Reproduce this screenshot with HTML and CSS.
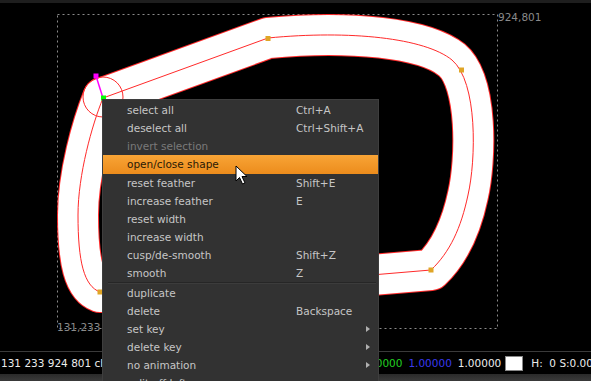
FILE: index.html
```html
<!DOCTYPE html>
<html>
<head>
<meta charset="utf-8">
<link rel="stylesheet" href="styles.css">
</head>
<body>
<div class="app">
  <div class="topbar"></div>
  <div class="viewer">
    <svg class="canvas" width="591" height="348" viewBox="0 3 591 348">
      <rect x="57.5" y="14.5" width="440" height="314" fill="none" stroke="#8a8a8a" stroke-width="1" stroke-dasharray="2 3"/>
      <text x="498" y="21" class="coord">924,801</text>
      <text x="57" y="331" class="coord">131,233</text>
      <path d="M103,98 L268,38 C350,30 425,38 452,60 C478,82 476,160 468,195 C461,228 450,252 431,270 L300,281 L100,292 C84,286 78,262 78,215 C78,175 92,125 103,98 Z" fill="none" stroke="#ff2a2a" stroke-width="42" stroke-linejoin="round"/>
      <path d="M103,98 L268,38 C350,30 425,38 452,60 C478,82 476,160 468,195 C461,228 450,252 431,270 L300,281 L100,292 C84,286 78,262 78,215 C78,175 92,125 103,98 Z" fill="none" stroke="#ffffff" stroke-width="40" stroke-linejoin="round"/>
      <path d="M103,98 L268,38 C350,30 425,38 452,60 C478,82 476,160 468,195 C461,228 450,252 431,270 L300,281 L100,292 C84,286 78,262 78,215 C78,175 92,125 103,98 Z" fill="none" stroke="#ff2a2a" stroke-width="1"/>
      <circle cx="103" cy="97" r="20" fill="none" stroke="#ff2a2a" stroke-width="1"/>
      <line x1="96" y1="76" x2="103" y2="98" stroke="#ff00ff" stroke-width="1.5"/>
      <rect x="93.5" y="73.5" width="5" height="5" fill="#ff00ff"/>
      <rect x="101" y="95.5" width="5" height="5" fill="#00ff00"/>
      <rect x="265.5" y="36" width="5" height="5" fill="#e0a526"/>
      <rect x="459" y="67.5" width="5" height="5" fill="#e0a526"/>
      <rect x="428.5" y="267.5" width="5" height="5" fill="#e0a526"/>
      <rect x="97.5" y="289.5" width="5" height="5" fill="#e0a526"/>
    </svg>
  </div>
  <div class="status-line"></div>
  <div class="status">
    <span class="st-left">131 233 924 801 channels: rgba  x=520 y=412 0.00000</span>
    <span class="st-green">1.00000</span>
    <span class="st-blue">1.00000</span>
    <span class="st-white">1.00000</span>
    <span class="swatch"></span>
    <span class="st-hsv">H:  0 S:0.00000 V:1.00000</span>
  </div>
  <div class="bottombar"></div>

  <div class="menu">
    <div class="item"><span class="label">select all</span><span class="key">Ctrl+A</span><span class="arr"></span></div>
    <div class="item"><span class="label">deselect all</span><span class="key">Ctrl+Shift+A</span><span class="arr"></span></div>
    <div class="item disabled"><span class="label">invert selection</span><span class="key"></span><span class="arr"></span></div>
    <div class="item active"><span class="label">open/close shape</span><span class="key"></span><span class="arr"></span></div>
    <div class="item"><span class="label">reset feather</span><span class="key">Shift+E</span><span class="arr"></span></div>
    <div class="item"><span class="label">increase feather</span><span class="key">E</span><span class="arr"></span></div>
    <div class="item"><span class="label">reset width</span><span class="key"></span><span class="arr"></span></div>
    <div class="item"><span class="label">increase width</span><span class="key"></span><span class="arr"></span></div>
    <div class="item"><span class="label">cusp/de-smooth</span><span class="key">Shift+Z</span><span class="arr"></span></div>
    <div class="item"><span class="label">smooth</span><span class="key">Z</span><span class="arr"></span></div>
    <div class="sep"></div>
    <div class="item"><span class="label">duplicate</span><span class="key"></span><span class="arr"></span></div>
    <div class="item"><span class="label">delete</span><span class="key">Backspace</span><span class="arr"></span></div>
    <div class="item"><span class="label">set key</span><span class="key"></span><span class="arr sub"></span></div>
    <div class="item"><span class="label">delete key</span><span class="key"></span><span class="arr sub"></span></div>
    <div class="item"><span class="label">no animation</span><span class="key"></span><span class="arr sub"></span></div>
    <div class="item"><span class="label">split off left</span><span class="key"></span><span class="arr"></span></div>
  </div>

  <svg class="cursor" width="14" height="21" viewBox="0 0 14 21">
    <path d="M1,1 L1,16 L4.5,12.5 L7.5,19 L10,18 L7,11.5 L12,11.5 Z" fill="#ffffff" stroke="#000000" stroke-width="1" stroke-linejoin="round"/>
  </svg>
</div>
</body>
</html>
```
FILE: styles.css
```css
html, body {
  margin: 0;
  padding: 0;
  background: #000;
}
.app {
  position: relative;
  width: 591px;
  height: 381px;
  overflow: hidden;
  display: flex;
  flex-direction: column;
  font-family: "DejaVu Sans", Verdana, sans-serif;
  font-size: 10.5px;
}
.topbar {
  height: 3px;
  background: #1e1e1e;
  flex: none;
}
.viewer {
  position: relative;
  height: 348px;
  flex: none;
  background: #000;
}
.canvas {
  position: absolute;
  left: 0;
  top: 0;
  display: block;
}
.coord {
  font-family: "DejaVu Sans", sans-serif;
  font-size: 10.5px;
  fill: #8a8a8a;
}
.status-line {
  height: 1px;
  background: #3a3a3a;
  flex: none;
}
.status {
  height: 22px;
  flex: none;
  background: #000;
  display: flex;
  align-items: center;
  white-space: pre;
  overflow: hidden;
  color: #ececec;
  line-height: 22px;
}
.st-left {
  width: 358px;
  padding-left: 1px;
  overflow: hidden;
  flex: none;
}
.st-green { color: #22d022; margin-right: 6px; flex: none; }
.st-blue { color: #3a3aee; margin-right: 6px; flex: none; }
.st-white { color: #ececec; margin-right: 4px; flex: none; }
.swatch {
  width: 18px;
  height: 15px;
  background: #fff;
  border: 1px solid #888;
  box-sizing: border-box;
  margin-right: 8px;
  flex: none;
}
.st-hsv { flex: none; }
.bottombar {
  flex: 1;
  background: linear-gradient(#2a2a2a, #3a3a3a);
}
.menu {
  position: absolute;
  left: 102px;
  top: 99px;
  width: 277px;
  bottom: -20px;
  box-sizing: border-box;
  background: #323232;
  border: 1px solid #3e3e3e;
  padding-top: 1px;
  color: #c6c6c6;
  overflow: hidden;
}
.item {
  display: grid;
  grid-template-columns: 169px 1fr 14px;
  height: 18px;
  line-height: 18px;
  padding-left: 24px;
  white-space: nowrap;
}
.item.disabled { color: #7a7a7a; }
.item.active {
  height: 19px;
  line-height: 19px;
  background: linear-gradient(#f8a436, #ec8c1c);
  color: #2a1a06;
}
.arr { position: relative; }
.arr.sub::after {
  content: "";
  position: absolute;
  left: 2px;
  top: 6px;
  border-left: 4px solid #b0b0b0;
  border-top: 3px solid transparent;
  border-bottom: 3px solid transparent;
}
.sep {
  height: 0;
  border-top: 1px solid #262626;
  border-bottom: 1px solid #3c3c3c;
  margin: 0 2px 0 5px;
}
.cursor {
  position: absolute;
  left: 235px;
  top: 165px;
}
```
